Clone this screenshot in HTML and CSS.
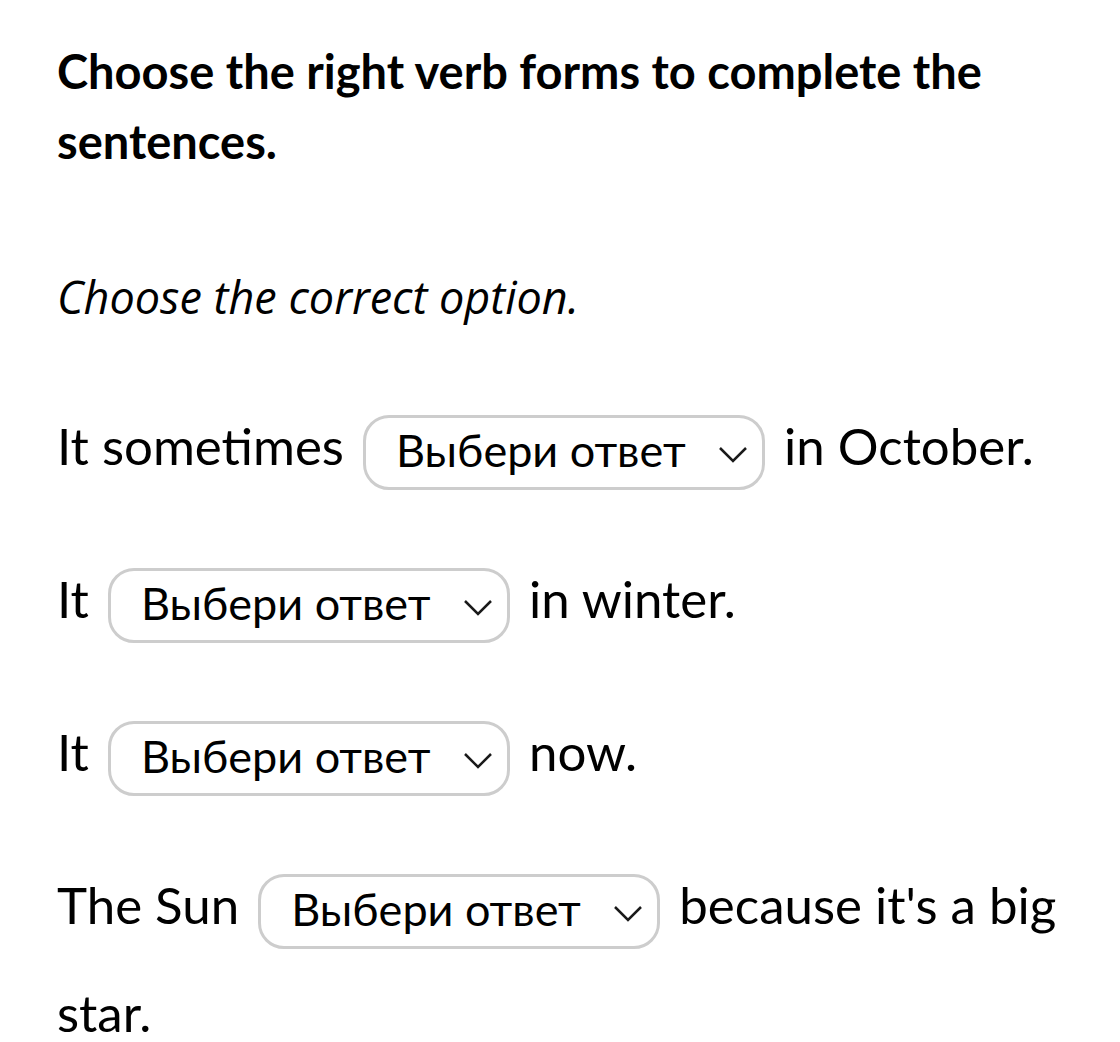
FILE: index.html
```html
<!DOCTYPE html>
<html lang="ru">
<head>
    <meta charset="UTF-8">
    <title>Choose the right verb forms</title>
    <link rel="stylesheet" href="styles.css">
</head>
<body>

    <div class="task">
        <h2 class="task-title">Choose the right verb forms to complete the sentences.</h2>

        <p class="task-hint">Choose the correct option.</p>

        <!-- sentences with dropdowns -->
        <p class="sentence">It sometimes
            <span class="choice"><span class="choice-text">Выбери ответ</span><svg class="chevron" viewBox="0 0 30 17"><path d="M2 2 L15 15 L28 2"/></svg></span>
            in October.</p>

        <p class="sentence">It
            <span class="choice"><span class="choice-text">Выбери ответ</span><svg class="chevron" viewBox="0 0 30 17"><path d="M2 2 L15 15 L28 2"/></svg></span>
            in winter.</p>

        <p class="sentence">It
            <span class="choice"><span class="choice-text">Выбери ответ</span><svg class="chevron" viewBox="0 0 30 17"><path d="M2 2 L15 15 L28 2"/></svg></span>
            now.</p>

        <p class="sentence">The Sun
            <span class="choice"><span class="choice-text">Выбери ответ</span><svg class="chevron" viewBox="0 0 30 17"><path d="M2 2 L15 15 L28 2"/></svg></span>
            because it's a big star.</p>
    </div>

</body>
</html>
```

FILE: styles.css
```css
body {
    margin: 0;
    background: #fff;
    color: #000;
    font-family: Lato, "Noto Sans", sans-serif;
}

.task {
    padding: 36px 40px 0 57px;
}

.task-title {
    font-size: 47px;
    font-weight: 700;
    line-height: 70px;
    margin: 0 0 96px 0;
}

.task-hint {
    font-family: "Open Sans", sans-serif;
    font-style: italic;
    font-size: 45px;
    line-height: 50px;
    margin: 0 0 70px 0;
}

.sentence {
    font-size: 51px;
    line-height: 108px;
    margin: 0 0 45px 0;
}

.choice {
    display: inline-flex;
    align-items: center;
    justify-content: space-between;
    box-sizing: border-box;
    width: 402px;
    height: 75px;
    padding: 0 14px 4px 30px;
    margin: 0 6px 0 6px;
    border: 3px solid #cdcdcd;
    border-radius: 26px;
    vertical-align: middle;
    font-size: 45px;
    line-height: 1;
}

.chevron {
    width: 30px;
    height: 17px;
    margin-top: 8px;
    fill: none;
    stroke: #1a1a1a;
    stroke-width: 2.5;
}
```
